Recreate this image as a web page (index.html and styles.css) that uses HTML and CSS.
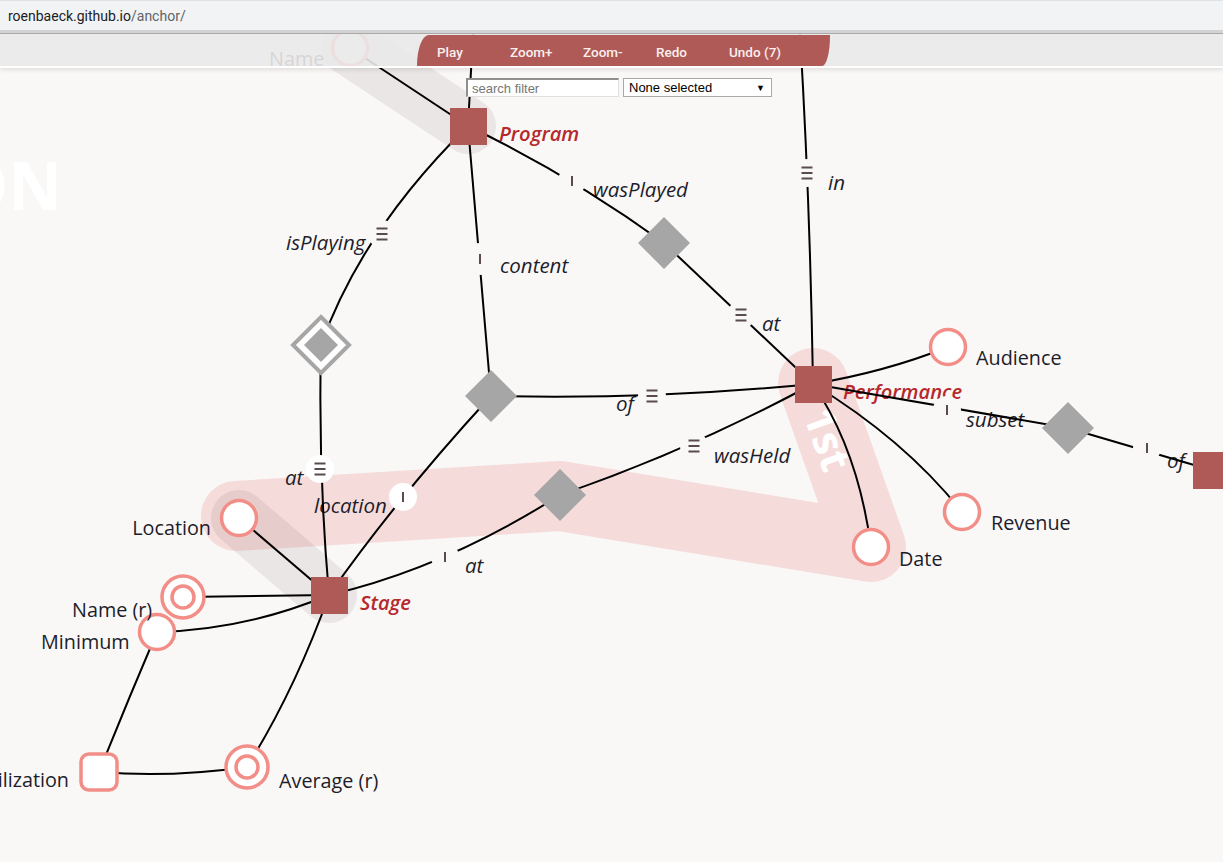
FILE: index.html
```html
<!DOCTYPE html>
<html lang="en">
<head>
<meta charset="utf-8">
<title>Anchor Modeler</title>
<link rel="stylesheet" href="styles.css">
</head>
<body>
<div class="browser-bar"><span class="url-host">roenbaeck.github.io</span><span class="url-path">/anchor/</span></div>
<div class="stage">
  <svg class="canvas" width="1223" height="829" viewBox="0 33 1223 829">
    <text class="bigword" x="62" y="210" text-anchor="end">ION</text>
    <path class="band-pink" d="M236,516 L560,496 L871,547 L813,383"/>
    <path class="band-gray" d="M350,48 L468,126"/>
    <path class="band-gray" d="M239,518 L329,595"/>
    <text class="band-text" transform="translate(829,439) rotate(70.5)" text-anchor="middle" dominant-baseline="central">1st</text>

    <g class="edge-labels">
      <text class="edge-label" x="593" y="197">wasPlayed</text>
      <text class="edge-label" x="762" y="331">at</text>
      <text class="edge-label" x="828" y="190">in</text>
      <text class="edge-label" x="500" y="273">content</text>
      <text class="edge-label" x="286" y="250">isPlaying</text>
      <text class="edge-label" x="285" y="485">at</text>
      <text class="edge-label" x="616" y="411">of</text>
      <text class="edge-label" x="314" y="513">location</text>
      <text class="edge-label" x="714" y="463">wasHeld</text>
      <text class="edge-label" x="465" y="573">at</text>
      <text class="edge-label" x="966" y="427">subset</text>
      <text class="edge-label" x="1167" y="468">of</text>
    </g>
    <g class="anchor-labels">
      <text class="anchor-label" x="499" y="141">Program</text>
      <text class="anchor-label" x="843" y="399">Performance</text>
      <text class="anchor-label" x="360" y="610">Stage</text>
    </g>

    <g class="edges">
      <path d="M350,48 L468,126"/>
      <path d="M468,126 L473,34"/>
      <path d="M813,384 Q810,200 800,34"/>
      <path d="M468,126 Q570,175 664,243"/>
      <path d="M664,243 L813,384"/>
      <path d="M468,126 Q480,260 491,396"/>
      <path d="M468,126 Q362,230 321,345"/>
      <path d="M321,345 Q318,470 329,595"/>
      <path d="M491,396 Q650,400 813,384"/>
      <path d="M491,396 Q398,497 329,595"/>
      <path d="M560,495 Q690,450 813,384"/>
      <path d="M560,495 Q445,568 329,595"/>
      <path d="M813,384 Q885,372 948,347"/>
      <path d="M813,384 Q905,440 962,512"/>
      <path d="M813,384 Q858,450 871,547"/>
      <path d="M813,384 L1068,428"/>
      <path d="M1068,428 L1211,470"/>
      <path d="M329,595 L239,518"/>
      <path d="M329,595 L183,597"/>
      <path d="M329,595 Q245,630 157,632"/>
      <path d="M329,595 Q295,690 247,767"/>
      <path d="M157,632 Q128,700 99,772"/>
      <path d="M99,772 Q170,778 247,767"/>
    </g>

    <g class="markers">
      <g transform="translate(572,181)"><circle class="marker-bg" r="14"/><rect class="mk" x="-1" y="-5" width="2" height="10"/></g>
      <g transform="translate(741,315)"><circle class="marker-bg" r="14"/><path class="mk-line" d="M-5.5,-5.5 H5.5 M-5.5,0 H5.5 M-5.5,5.5 H5.5"/></g>
      <g transform="translate(807,173)"><circle class="marker-bg" r="14"/><path class="mk-line" d="M-5.5,-5.5 H5.5 M-5.5,0 H5.5 M-5.5,5.5 H5.5"/></g>
      <g transform="translate(480,259)"><circle class="marker-bg" r="16"/><rect class="mk" x="-1" y="-5" width="2" height="10"/></g>
      <g transform="translate(382,234)"><circle class="marker-bg" r="14"/><path class="mk-line" d="M-5.5,-5.5 H5.5 M-5.5,0 H5.5 M-5.5,5.5 H5.5"/></g>
      <g transform="translate(320,469)"><circle class="marker-bg marker-lit" r="14"/><path class="mk-line" d="M-5.5,-5.5 H5.5 M-5.5,0 H5.5 M-5.5,5.5 H5.5"/></g>
      <g transform="translate(652,396)"><circle class="marker-bg" r="14"/><path class="mk-line" d="M-5.5,-5.5 H5.5 M-5.5,0 H5.5 M-5.5,5.5 H5.5"/></g>
      <g transform="translate(403,497)"><circle class="marker-bg marker-lit" r="14"/><rect class="mk" x="-1" y="-5" width="2" height="10"/></g>
      <g transform="translate(694,446)"><circle class="marker-bg" r="14"/><path class="mk-line" d="M-5.5,-5.5 H5.5 M-5.5,0 H5.5 M-5.5,5.5 H5.5"/></g>
      <g transform="translate(445,557)"><circle class="marker-bg" r="14"/><rect class="mk" x="-1" y="-5" width="2" height="10"/></g>
      <g transform="translate(947,410)"><circle class="marker-bg" r="14"/><rect class="mk" x="-1" y="-5" width="2" height="10"/></g>
      <g transform="translate(1147,448)"><circle class="marker-bg" r="14"/><rect class="mk" x="-1" y="-5" width="2" height="10"/></g>
    </g>

    <g class="ties">
      <polygon class="tie" points="664,217 690,243 664,269 638,243"/>
      <polygon class="tie" points="491,370 517,396 491,422 465,396"/>
      <polygon class="tie" points="560,469 586,495 560,521 534,495"/>
      <polygon class="tie" points="1068,402 1094,428 1068,454 1042,428"/>
      <polygon class="tie-hist" points="321,317 349,345 321,373 293,345"/>
      <polygon class="tie" points="321,328 338,345 321,362 304,345"/>
    </g>

    <g class="anchors">
      <rect class="anchor" x="450" y="108" width="37" height="37"/>
      <rect class="anchor" x="795" y="366" width="37" height="37"/>
      <rect class="anchor" x="311" y="577" width="37" height="37"/>
      <rect class="anchor" x="1193" y="452" width="37" height="37"/>
    </g>

    <g class="attributes">
      <circle class="attr" cx="350" cy="48" r="17.5"/>
      <circle class="attr" cx="948" cy="347" r="17.5"/>
      <circle class="attr" cx="962" cy="512" r="17.5"/>
      <circle class="attr" cx="871" cy="547" r="17.5"/>
      <circle class="attr" cx="239" cy="518" r="17.5"/>
      <circle class="attr" cx="157" cy="632" r="17.5"/>
      <circle class="attr" cx="183" cy="597" r="21"/>
      <circle class="attr" cx="183" cy="597" r="11"/>
      <circle class="attr" cx="247" cy="767" r="21"/>
      <circle class="attr" cx="247" cy="767" r="11"/>
      <rect class="attr" x="81" y="754" width="36" height="36" rx="8"/>
    </g>

    <g class="attr-labels">
      <text class="attr-label" x="269" y="66">Name</text>
      <text class="attr-label" x="976" y="365">Audience</text>
      <text class="attr-label" x="991" y="530">Revenue</text>
      <text class="attr-label" x="899" y="566">Date</text>
      <text class="attr-label" x="211" y="535" text-anchor="end">Location</text>
      <text class="attr-label" x="72" y="617">Name (r)</text>
      <text class="attr-label" x="41" y="649">Minimum</text>
      <text class="attr-label" x="279" y="788">Average (r)</text>
      <text class="attr-label" x="69" y="787" text-anchor="end">Utilization</text>
    </g>
  </svg>

  <div class="overlay">
    <div class="menubar">
      <nav class="menu-tab">
        <span class="menu-item">Play</span>
        <span class="menu-item">Zoom+</span>
        <span class="menu-item">Zoom-</span>
        <span class="menu-item">Redo</span>
        <span class="menu-item">Undo (7)</span>
      </nav>
    </div>
    <div class="filter-row">
      <input class="search" type="text" placeholder="search filter">
      <div class="select"><span>None selected</span><span class="caret">▼</span></div>
    </div>
  </div>
</div>
</body>
</html>
```
FILE: styles.css
```css
html, body {
  margin: 0;
  padding: 0;
  background: #f9f8f7;
}
body {
  width: 1223px;
  height: 862px;
  overflow: hidden;
  font-family: "Open Sans", "Liberation Sans", sans-serif;
}
.browser-bar {
  height: 29px;
  border-top: 1px solid #dee1e6;
  border-bottom: 3px solid #d3d3d3;
  background: #f1f3f4;
  display: flex;
  align-items: center;
  padding-left: 8px;
  font-family: Roboto, "Liberation Sans", sans-serif;
  font-size: 14px;
}
.url-host { color: #202124; }
.url-path { color: #5f6368; }

.stage {
  position: relative;
  width: 1223px;
  height: 829px;
  overflow: hidden;
}
.canvas {
  display: block;
}
.bigword {
  font-family: "Open Sans", sans-serif;
  font-weight: 700;
  font-size: 66px;
  fill: #ffffff;
}
.band-text {
  font-family: "Open Sans", sans-serif;
  font-weight: 700;
  font-size: 42px;
  fill: #ffffff;
}
.band-pink {
  fill: none;
  stroke: rgba(232, 110, 110, 0.2);
  stroke-width: 70;
  stroke-linecap: round;
  stroke-linejoin: round;
}
.band-gray {
  fill: none;
  stroke: rgba(100, 80, 80, 0.1);
  stroke-width: 56;
  stroke-linecap: round;
}
.edges path {
  fill: none;
  stroke: #000;
  stroke-width: 2;
}
.marker-bg { fill: #f9f8f7; }
.marker-lit { fill: #ffffff; }
.mk { fill: #5a4c4e; }
.mk-line {
  fill: none;
  stroke: #5a4c4e;
  stroke-width: 1.8;
}
.tie { fill: #a6a6a6; }
.tie-hist {
  fill: #ffffff;
  stroke: #a6a6a6;
  stroke-width: 4;
}
.anchor { fill: #af5a56; }
.attr {
  fill: #ffffff;
  stroke: #f28d87;
  stroke-width: 3.5;
}
.attr-label {
  font-family: "Open Sans", sans-serif;
  font-size: 19.8px;
  fill: #1d1d2b;
}
.edge-label {
  font-family: "Open Sans", sans-serif;
  font-style: italic;
  font-size: 20.5px;
  fill: #1d1d2b;
}
.anchor-label {
  font-family: "Open Sans", sans-serif;
  font-style: italic;
  font-weight: 600;
  font-size: 20.2px;
  fill: #b5292c;
}

.overlay {
  position: absolute;
  top: 0;
  left: 0;
  right: 0;
}
.menubar {
  height: 32px;
  border-top: 1px solid #a9a9a9;
  border-bottom: 2px solid #ffffff;
  background: rgba(234, 233, 233, 0.9);
  box-shadow: 0 2px 4px rgba(0, 0, 0, 0.10);
  padding-left: 417px;
  display: flex;
  align-items: flex-end;
}
.menu-tab {
  height: 31px;
  box-sizing: border-box;
  background: #b05a57;
  border-radius: 12px 0 8px 0 / 30px 0 30px 0;
  padding: 3px 28px 0 20px;
  display: flex;
  align-items: center;
}
.menu-item {
  width: 73px;
  font-family: Roboto, "Liberation Sans", sans-serif;
  font-size: 13.5px;
  font-weight: 500;
  color: #fbefee;
}
.filter-row {
  display: flex;
  gap: 4px;
  margin-top: 10px;
  padding-left: 466px;
}
.search {
  box-sizing: border-box;
  width: 153px;
  height: 19px;
  margin: 0;
  padding: 0 4px;
  border-style: solid;
  border-width: 2px 1px 1px 2px;
  border-color: #8f8f8f #e0e0e0 #e0e0e0 #8f8f8f;
  background: #ffffff;
  font-family: "Liberation Sans", Arial, sans-serif;
  font-size: 13px;
  outline: none;
}
.search::placeholder { color: #767676; }
.select {
  box-sizing: border-box;
  width: 149px;
  height: 19px;
  border: 1px solid #a9a9a9;
  background: #ffffff;
  display: flex;
  align-items: center;
  justify-content: space-between;
  padding: 0 6px 0 5px;
  font-family: "Liberation Sans", Arial, sans-serif;
  font-size: 13px;
  color: #000;
}
.caret { font-size: 9px; }
```
